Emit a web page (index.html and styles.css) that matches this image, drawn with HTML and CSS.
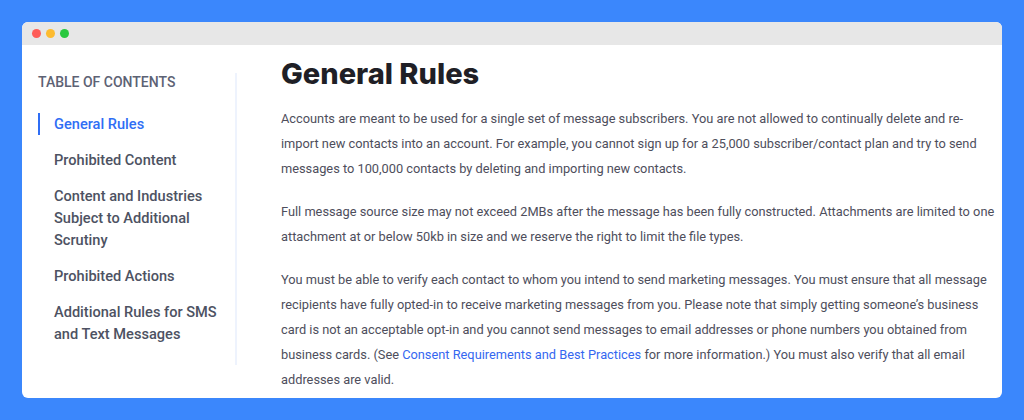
FILE: index.html
```html
<!DOCTYPE html>
<html lang="en">
<head>
    <meta charset="UTF-8">
    <meta name="viewport" content="width=device-width, initial-scale=1.0">
    <title>General Rules</title>
    <link rel="stylesheet" href="styles.css">
</head>
<body>
    <div class="window">
        <div class="title-bar">
            <span class="dot red"></span>
            <span class="dot yellow"></span>
            <span class="dot green"></span>
        </div>
        <div class="page">
            <aside class="toc">
                <h4>Table of Contents</h4>
                <ul>
                    <li class="active"><a href="#">General Rules</a></li>
                    <li><a href="#">Prohibited Content</a></li>
                    <li><a href="#">Content and Industries Subject to Additional Scrutiny</a></li>
                    <li><a href="#">Prohibited Actions</a></li>
                    <li><a href="#">Additional Rules for SMS and Text Messages</a></li>
                </ul>
            </aside>
            <main class="article">
                <h1>General Rules</h1>
                <p>Accounts are meant to be used for a single set of message subscribers. You are not allowed to continually delete and re-import new contacts into an account. For example, you cannot sign up for a 25,000 subscriber/contact plan and try to send messages to 100,000 contacts by deleting and importing new contacts.</p>
                <p>Full message source size may not exceed 2MBs after the message has been fully constructed. Attachments are limited to one attachment at or below 50kb in size and we reserve the right to limit the file types.</p>
                <p>You must be able to verify each contact to whom you intend to send marketing messages. You must ensure that all message recipients have fully opted-in to receive marketing messages from you. Please note that simply getting someone’s business card is not an acceptable opt-in and you cannot send messages to email addresses or phone numbers you obtained from business cards. (See <a href="#">Consent Requirements and Best Practices</a> for more information.) You must also verify that all email addresses are valid.</p>
            </main>
        </div>
    </div>
</body>
</html>
```

FILE: styles.css
```css
* {
    margin: 0;
    padding: 0;
    box-sizing: border-box;
}

body {
    background: #3b87fc;
    padding: 22px;
    font-family: Roboto, 'Liberation Sans', Arial, sans-serif;
}

.window {
    width: 980px;
    height: 376px;
    background: #fff;
    border-radius: 6px;
    overflow: hidden;
}

.title-bar {
    height: 23px;
    background: #e7e7e7;
    display: flex;
    align-items: center;
    gap: 5px;
    padding-left: 10px;
}

.dot {
    width: 9px;
    height: 9px;
    border-radius: 50%;
}

.dot.red { background: #fe5c58; }
.dot.yellow { background: #fdbb2f; }
.dot.green { background: #29c83f; }

.page {
    display: flex;
    align-items: flex-start;
    padding-top: 28px;
}

.toc {
    width: 199px;
    flex-shrink: 0;
    height: 292px;
    margin-left: 16px;
    border-right: 2px solid #eef3fd;
}

.toc h4 {
    font-size: 14px;
    font-weight: 500;
    color: #5d6274;
    text-transform: uppercase;
    line-height: 18px;
    margin-bottom: 22px;
}

.toc ul {
    list-style: none;
    display: flex;
    flex-direction: column;
    gap: 14px;
}

.toc li {
    padding-left: 14px;
    border-left: 2px solid transparent;
    line-height: 22px;
    padding-right: 12px;
}

.toc li.active {
    border-left-color: #2f6ef5;
}

.toc li a {
    color: #4d5262;
    font-size: 14.6px;
    font-weight: 500;
    text-decoration: none;
}

.toc li.active a {
    color: #2f6ef5;
}

.article {
    flex: 1;
    min-width: 0;
    padding-left: 44px;
    padding-right: 4px;
    margin-top: -19px;
}

.article h1 {
    font-family: Inter, 'DejaVu Sans', sans-serif;
    font-weight: 800;
    font-size: 29px;
    color: #1f1f26;
    line-height: 40px;
    margin-bottom: 12px;
}

.article p {
    font-size: 12.8px;
    line-height: 25px;
    color: #4e4e5c;
    margin-bottom: 18px;
}

.article p a {
    color: #3567f0;
    text-decoration: none;
}
```
